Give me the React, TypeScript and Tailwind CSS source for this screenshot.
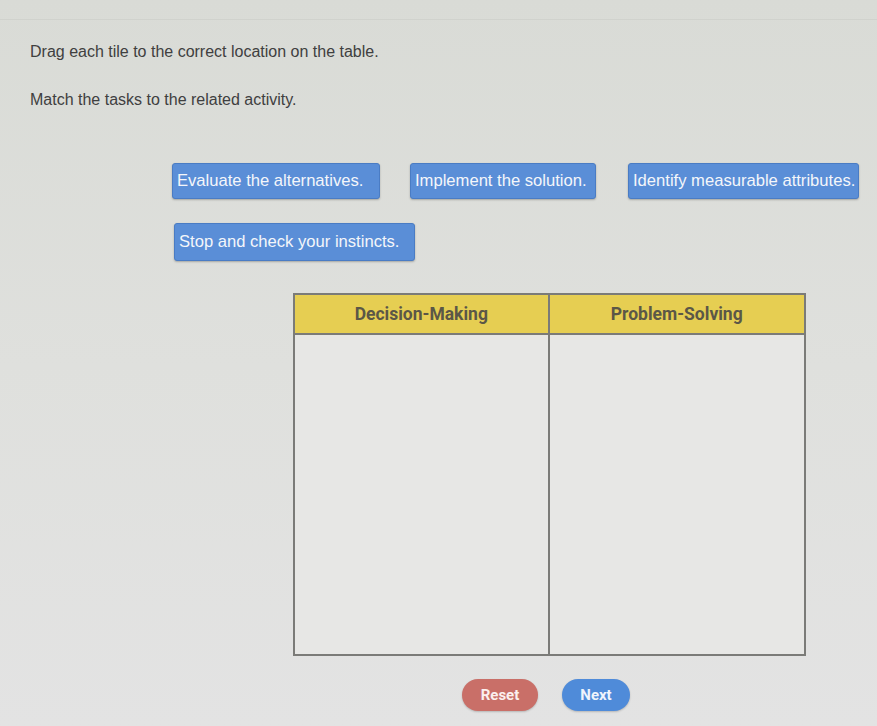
import React from 'react';

const tilesRow1 = [
  { label: 'Evaluate the alternatives.', w: 'w-[208px]', ml: 'ml-0' },
  { label: 'Implement the solution.', w: 'w-[186px]', ml: 'ml-[30px]' },
  { label: 'Identify measurable attributes.', w: 'w-[231px]', ml: 'ml-[32px]' },
];

const Tile: React.FC<{ label: string; className?: string }> = ({ label, className = '' }) => (
  <div
    className={`flex items-center h-[36px] px-[4px] rounded-[3px] bg-[#5a8ed7] border border-[#4a7cc4] text-[16.6px] text-[#f4f6fa] shadow-[0_1px_2px_rgba(0,0,0,0.25)] whitespace-nowrap ${className}`}
  >
    {label}
  </div>
);

export default function App() {
  return (
    <div className="w-[877px] h-[726px] overflow-hidden bg-linear-to-b from-[#d9dbd6] via-[#dfe0dd] to-[#e3e3e3] font-['Liberation_Sans',Arial,sans-serif] text-[#3f4040]">
      <div className="h-[20px] border-b border-[#d0d2cd]" />

      <div className="pl-[30px] pt-[22px] text-[16px] leading-[20px]">
        Drag each tile to the correct location on the table.
      </div>
      <div className="pl-[30px] pt-[28px] text-[16px] leading-[20px]">
        Match the tasks to the related activity.
      </div>

      <div className="pl-[172px] pt-[53px]">
        <div className="flex items-center">
          {tilesRow1.map((t) => (
            <Tile key={t.label} label={t.label} className={`${t.w} ${t.ml}`} />
          ))}
        </div>
        <div className="pt-[24px] pl-[2px]">
          <Tile label="Stop and check your instincts." className="w-[241px] h-[38px]" />
        </div>
      </div>

      <div className="pl-[293px] pt-[32px]">
        <div className="w-[513px] border-2 border-[#7b7b78] bg-[#e7e7e5]">
          <div className="grid grid-cols-2 h-[40px] bg-[#e6ce52] border-b-2 border-[#7b7b78]">
            <div className="flex items-center justify-center border-r-2 border-[#7b7b78] font-['Roboto',sans-serif] font-bold text-[17.5px] text-[#5b5747]">
              Decision-Making
            </div>
            <div className="flex items-center justify-center font-['Roboto',sans-serif] font-bold text-[17.5px] text-[#5b5747]">
              Problem-Solving
            </div>
          </div>
          <div className="grid grid-cols-2 h-[319px]">
            <div className="border-r-2 border-[#7b7b78]" />
            <div />
          </div>
        </div>
      </div>

      <div className="flex gap-[24px] pt-[23px] pl-[462px]">
        <button className="w-[76px] h-[32px] rounded-full bg-[#c96f68] text-[#fbefee] font-['Roboto',sans-serif] font-bold text-[15px] shadow-[0_1px_2px_rgba(0,0,0,0.2)]">
          Reset
        </button>
        <button className="w-[68px] h-[32px] rounded-full bg-[#4f8bd9] text-[#eef4fc] font-['Roboto',sans-serif] font-bold text-[15px] shadow-[0_1px_2px_rgba(0,0,0,0.2)]">
          Next
        </button>
      </div>
    </div>
  );
}
